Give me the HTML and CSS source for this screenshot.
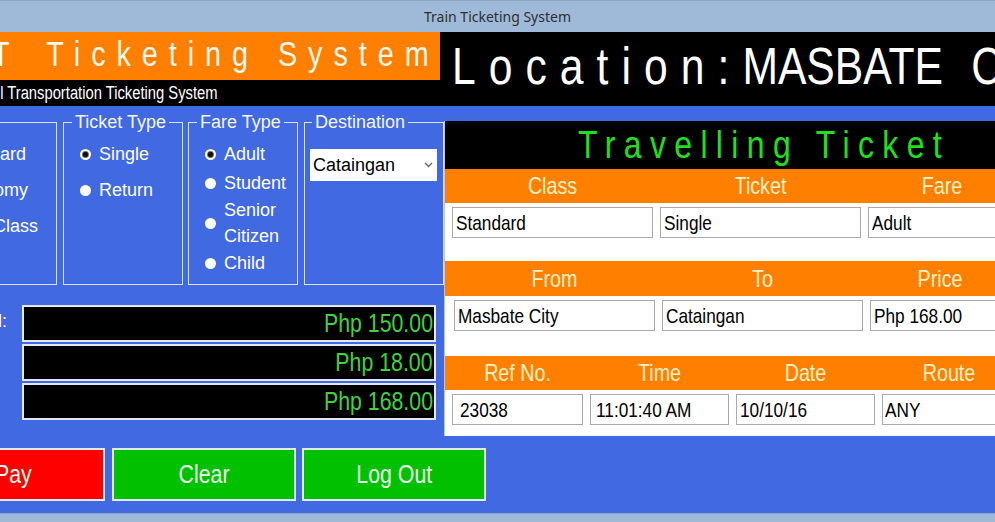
FILE: index.html
```html
<!DOCTYPE html>
<html lang="en">
<head>
<meta charset="utf-8">
<title>Train Ticketing System</title>
<link rel="stylesheet" href="styles.css">
</head>
<body>
<div class="window">
  <div class="titlebar">Train Ticketing System</div>

  <header class="header">
    <div class="brand">
      <div class="brand-title"><span class="nar"><span class="brand-t">T</span> Ticketing System</span></div>
      <div class="brand-sub"><span class="nar">Rail Transportation Ticketing System</span></div>
    </div>
    <div class="location"><span class="nar"><span class="loc-label">Location:</span><span class="loc-name">MASBATE CITY</span></span></div>
  </header>

  <main class="main">
    <div class="top">
      <div class="controls">
        <div class="groups">
          <fieldset class="group g-class">
            <legend>Class</legend>
            <ul class="radios r-std">
              <li><span class="radio on"></span>Standard</li>
              <li><span class="radio"></span>Economy</li>
              <li><span class="radio"></span>First Class</li>
            </ul>
          </fieldset>
          <fieldset class="group g-ticket">
            <legend>Ticket Type</legend>
            <ul class="radios r-std">
              <li><span class="radio on"></span>Single</li>
              <li><span class="radio"></span>Return</li>
            </ul>
          </fieldset>
          <fieldset class="group g-fare">
            <legend>Fare Type</legend>
            <ul class="radios r-fare">
              <li class="f-adult"><span class="radio on"></span>Adult</li>
              <li class="f-student"><span class="radio"></span>Student</li>
              <li class="f-senior"><span class="radio"></span><span class="two-line">Senior Citizen</span></li>
              <li class="f-child"><span class="radio"></span>Child</li>
            </ul>
          </fieldset>
          <fieldset class="group g-dest">
            <legend>Destination</legend>
            <div class="select">
              <span>Cataingan</span>
              <svg class="chev" width="9" height="6" viewBox="0 0 9 6"><path d="M1 1 L4.5 4.5 L8 1" fill="none" stroke="#6a6a6a" stroke-width="1.4"/></svg>
            </div>
          </fieldset>
        </div>

        <div class="totals">
          <div class="total-row"><span class="total-label">Subtotal:</span><output class="amount"><span class="nar nar-r">Php 150.00</span></output></div>
          <div class="total-row"><span class="total-label">Tax:</span><output class="amount"><span class="nar nar-r">Php 18.00</span></output></div>
          <div class="total-row"><span class="total-label">Total:</span><output class="amount"><span class="nar nar-r">Php 168.00</span></output></div>
        </div>
      </div>

      <section class="ticket">
        <h1 class="ticket-title"><span class="nar">Travelling Ticket</span></h1>
        <div class="band cols3"><span class="nar nar-c">Class</span><span class="nar nar-c">Ticket</span><span class="nar nar-c">Fare</span></div>
        <div class="fields cols3">
          <div class="field"><span class="nar">Standard</span></div>
          <div class="field"><span class="nar">Single</span></div>
          <div class="field"><span class="nar">Adult</span></div>
        </div>
        <div class="band band2 cols3 shift"><span class="nar nar-c">From</span><span class="nar nar-c">To</span><span class="nar nar-c">Price</span></div>
        <div class="fields cols3 shift">
          <div class="field"><span class="nar">Masbate City</span></div>
          <div class="field"><span class="nar">Cataingan</span></div>
          <div class="field"><span class="nar">Php 168.00</span></div>
        </div>
        <div class="band band3 cols4"><span class="nar nar-c">Ref No.</span><span class="nar nar-c">Time</span><span class="nar nar-c">Date</span><span class="nar nar-c">Route</span></div>
        <div class="fields cols4">
          <div class="field ref"><span class="nar">23038</span></div>
          <div class="field time"><span class="nar">11:01:40 AM</span></div>
          <div class="field"><span class="nar">10/10/16</span></div>
          <div class="field route"><span class="nar">ANY</span></div>
        </div>
      </section>
    </div>

    <div class="actions">
      <button class="btn btn-pay"><span class="nar nar-c">Pay</span></button>
      <button class="btn btn-clear"><span class="nar nar-c">Clear</span></button>
      <button class="btn btn-logout"><span class="nar nar-c">Log Out</span></button>
    </div>
  </main>

  <div class="statusbar"></div>
</div>
</body>
</html>
```

FILE: styles.css
```css
* { box-sizing: border-box; }

html, body {
  margin: 0;
  padding: 0;
}

body {
  width: 995px;
  height: 522px;
  overflow: hidden;
  font-family: "Liberation Sans", Arial, sans-serif;
  background: #4169e1;
}

.window {
  width: 995px;
  height: 522px;
  display: flex;
  flex-direction: column;
  overflow: hidden;
}

/* condensed text (the app uses a narrow face) */
.nar {
  display: inline-block;
  white-space: nowrap;
  transform: scaleX(0.82);
  transform-origin: left center;
}
.nar-r { transform-origin: right center; }
.nar-c { transform-origin: center center; }

/* ---------- title bar ---------- */
.titlebar {
  flex: none;
  height: 32px;
  background: #9fbad9;
  border-top: 1px solid #8aa5c7;
  display: flex;
  align-items: center;
  justify-content: center;
  font-family: "Noto Sans", "Open Sans", sans-serif;
  font-size: 14px;
  color: #2e2e2e;
}

/* ---------- header ---------- */
.header {
  flex: none;
  height: 74px;
  display: flex;
  background: #000;
}

.brand {
  flex: none;
  width: 532px;
  margin-left: -92px;
  display: flex;
  flex-direction: column;
}

.brand-title {
  height: 48px;
  background: #ff8000;
  color: #fff8ec;
  font-size: 35px;
  line-height: 35px;
  padding: 4px 0 0 84px;
  letter-spacing: 13.4px;
  white-space: nowrap;
  overflow: hidden;
}

.brand-t { margin-right: 9px; }

.brand-sub {
  height: 26px;
  color: #fff;
  font-size: 18px;
  line-height: 18px;
  padding: 4px 0 0 70px;
  white-space: nowrap;
  overflow: hidden;
}

.location {
  flex: 1;
  min-width: 0;
  color: #fff;
  font-size: 52px;
  line-height: 52px;
  padding: 8px 0 0 12px;
  white-space: nowrap;
  overflow: hidden;
}

.loc-label {
  letter-spacing: 15.9px;
}

.loc-name {
  word-spacing: 20px;
}

/* ---------- main area ---------- */
.main {
  flex: none;
  height: 407px;
  background: #4169e1;
  display: flex;
  flex-direction: column;
}

.top {
  display: flex;
  height: 330px;
}

.controls {
  flex: none;
  width: 534px;
  margin-left: -90px;
  padding-top: 6px;
}

.groups {
  display: flex;
  padding-left: 7px;
  height: 173px;
}

.group {
  flex: none;
  margin: 0;
  padding: 0 0 0 16px;
  height: 173px;
  min-width: 0;
  border: 1px solid #dbe3f3;
}

.group legend {
  margin-left: -8px;
  padding: 0 3px;
  font-size: 18px;
  line-height: 20px;
  color: #f4f7ff;
}

.g-class  { width: 140px; }
.g-ticket { width: 120px; margin-left: 6px; }
.g-fare   { width: 110px; margin-left: 5px; }
.g-dest   { width: 140px; margin-left: 6px; padding-left: 5px; }
.g-dest legend { margin-left: 2px; }

.radios {
  list-style: none;
  margin: 0;
  padding: 0;
}

.radios li {
  display: flex;
  align-items: center;
  font-size: 18px;
  color: #fff;
  white-space: nowrap;
}

.r-std { padding-top: 4px; }
.r-std li { height: 36px; }

.r-fare { padding-top: 8px; }
.f-adult, .f-student { height: 29px; }
.f-senior { height: 50px; }
.f-child { height: 30px; }

.two-line {
  white-space: normal;
  width: 70px;
  line-height: 26px;
}

.radio {
  flex: none;
  width: 11px;
  height: 11px;
  border-radius: 50%;
  background: #fff;
  margin-right: 8px;
}

.radio.on {
  background: radial-gradient(circle, #151515 0 2.4px, #8a8a8a 3.2px, #fff 4px);
}

.select {
  margin-top: 17px;
  width: 127px;
  height: 32px;
  background: #fff;
  display: flex;
  align-items: center;
  justify-content: space-between;
  padding: 0 4px 0 3px;
  font-size: 18px;
  color: #000;
}

.chev { flex: none; }

/* ---------- totals ---------- */
.totals {
  margin-top: 20px;
  display: flex;
  flex-direction: column;
  gap: 2px;
}

.total-row {
  display: flex;
  align-items: center;
  height: 37px;
}

.total-label {
  flex: none;
  width: 112px;
  padding: 0 0 4px 26px;
  font-size: 18px;
  color: #fff;
  white-space: nowrap;
}

.amount {
  display: block;
  width: 414px;
  height: 37px;
  background: #000;
  border: 2px solid #e2e7f2;
  color: #3fd23f;
  font-size: 26px;
  line-height: 33px;
  text-align: right;
  padding-right: 1px;
  overflow: hidden;
}

/* ---------- ticket panel ---------- */
.ticket {
  flex: none;
  margin-top: 15px;
  width: 580px;
  height: 315px;
  background: #fff;
  border-left: 1px solid #b9c6e2;
}

.ticket-title {
  margin: 0;
  height: 48px;
  background: #000;
  color: #1fe01f;
  font-weight: normal;
  font-size: 39px;
  line-height: 39px;
  padding: 4px 0 0 133px;
  letter-spacing: 10.2px;
  white-space: nowrap;
  overflow: hidden;
}

.band {
  display: grid;
  height: 34px;
  background: #ff8000;
  color: #fff2c6;
  font-size: 24px;
  line-height: 34px;
  text-align: center;
  white-space: nowrap;
}

.band2 { height: 35px; line-height: 35px; margin-top: 23px; }
.band3 { margin-top: 25px; }

.fields {
  display: grid;
  margin-top: 4px;
}

.cols3 {
  grid-template-columns: 201px 201px 148px;
  column-gap: 7px;
  padding-left: 7px;
}

.cols3.shift {
  grid-template-columns: 201px 201px 140px;
  padding-left: 9px;
}

.cols4 {
  grid-template-columns: 131px 139px 139px 134px;
  column-gap: 7px;
  padding-left: 7px;
}

.field {
  height: 31px;
  border: 1px solid #a9a9a9;
  background: #fff;
  color: #000;
  font-size: 21px;
  line-height: 29px;
  padding: 0 3px;
  overflow: hidden;
}

.field.ref { padding-left: 7px; }
.field.time { padding-left: 5px; }
.field.route { padding-left: 2px; }

/* ---------- buttons ---------- */
.actions {
  display: flex;
  margin: 12px 0 0 -90px;
  padding-left: 11px;
}

.btn {
  flex: none;
  width: 184px;
  height: 53px;
  margin: 0;
  padding: 0;
  border: 2px solid #e0ede6;
  background: #00c000;
  color: #e9ffe9;
  font-family: "Liberation Sans", Arial, sans-serif;
  font-size: 26px;
}

.btn-pay { background: #ff0000; margin-right: 7px; }
.btn-clear { margin-right: 6px; }

/* ---------- bottom border ---------- */
.statusbar {
  flex: none;
  height: 9px;
  background: #9fbad9;
  border-top: 1px solid #86a2c6;
}
```
